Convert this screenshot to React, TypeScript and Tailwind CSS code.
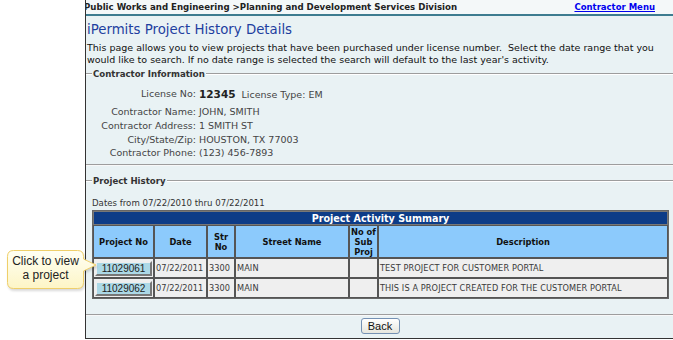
const verdana = "font-['DejaVu_Sans',Verdana,sans-serif]";

const rows = [
  { no: "11029061", date: "07/22/2011", str: "3300", street: "MAIN", desc: "TEST PROJECT FOR CUSTOMER PORTAL" },
  { no: "11029062", date: "07/22/2011", str: "3300", street: "MAIN", desc: "THIS IS A PROJECT CREATED FOR THE CUSTOMER PORTAL" },
];

const info = [
  { label: "Contractor Name:", value: "JOHN, SMITH" },
  { label: "Contractor Address:", value: "1 SMITH ST" },
  { label: "City/State/Zip:", value: "HOUSTON, TX  77003" },
  { label: "Contractor Phone:", value: "(123) 456-7893" },
];

const Legend = ({ title }: { title: string }) => (
  <div className="flex items-center h-[12px]">
    <div className="w-[6px] h-[2px] border-t border-[#9d9d9d] bg-white" />
    <span className="px-[1px] text-[8.6px] font-bold text-[#333] leading-[12px]">{title}</span>
    <div className="flex-1 h-[2px] border-t border-[#9d9d9d] bg-white" />
  </div>
);

const Rule = ({ className }: { className: string }) => (
  <div className={"h-[2px] border-t border-[#9d9d9d] bg-[#f8f8f8] " + className} />
);

const App = () => {
  return (
    <div className={"relative w-[673px] h-[340px] overflow-hidden bg-white " + verdana}>
      <div className="flex">
        <div className="w-[85px] shrink-0" />
        <div className="w-[589px] h-[339px] shrink-0 overflow-hidden border-l border-b border-[#333] bg-[#e9f2f4] flex flex-col">
          {/* header */}
          <div className="h-[14px] flex items-center justify-between bg-[#f4f8f9] pr-[19px]">
            <span className="-ml-[2px] text-[8.65px] font-bold text-[#222] whitespace-nowrap">
              Public Works and Engineering &gt;Planning and Development Services Division
            </span>
            <a className="text-[8.5px] font-bold text-[#0000ee] underline whitespace-nowrap">Contractor Menu</a>
          </div>
          <div className="h-[2px] bg-[#3d7c90]" />

          <div className="mt-[4px] h-[20px] leading-[20px] pl-[1px] text-[13.3px] text-[#1e3fa0] whitespace-nowrap">
            iPermits Project History Details
          </div>

          <div className="mt-[2px] pl-[1px] text-[9.5px] leading-[12px] text-[#111] whitespace-nowrap">
            <div>This page allows you to view projects that have been purchased under license number.&nbsp; Select the date range that you</div>
            <div>would like to search. If no date range is selected the search will default to the last year's activity.</div>
          </div>

          <div className="mt-[2px]">
            <Legend title="Contractor Information" />
          </div>

          <div className="flex flex-col text-[9.5px] text-[#444] leading-[14px]">
            <div className="flex h-[14px] mt-[7px]">
              <div className="w-[110px] text-right whitespace-nowrap">License No:</div>
              <div className="pl-[3px] whitespace-nowrap">
                <span className="font-bold text-[#222] text-[10.5px]">12345</span>
                <span className="pl-[6px]">License Type: EM</span>
              </div>
            </div>
            <div className="mt-[4px] flex flex-col">
              {info.map((r) => (
                <div key={r.label} className="flex h-[13.8px]">
                  <div className="w-[110px] text-right whitespace-nowrap">{r.label}</div>
                  <div className="pl-[3px] whitespace-nowrap">{r.value}</div>
                </div>
              ))}
            </div>
          </div>

          <Rule className="mt-[4px]" />

          <div className="mt-[9px]">
            <Legend title="Project History" />
          </div>

          <div className="mt-[10px] h-[12px] leading-[12px] pl-[6px] text-[8.6px] text-[#333] whitespace-nowrap">
            Dates from 07/22/2010 thru 07/22/2011
          </div>

          <div className="mt-[1px] pl-[6px]">
            <table className="table-fixed w-[577px] border-separate border-spacing-0 border border-[#666]">
              <colgroup>
                <col className="w-[61px]" />
                <col className="w-[53px]" />
                <col className="w-[28px]" />
                <col className="w-[114px]" />
                <col className="w-[29px]" />
                <col className="w-[290px]" />
              </colgroup>
              <tbody>
                <tr className="h-[14px]">
                  <td colSpan={6} className="p-0 border border-[#777] bg-[#0d3c87] text-center text-white font-bold text-[9.6px] leading-[11px]">
                    Project Activity Summary
                  </td>
                </tr>
                <tr className="h-[33px] bg-[#8ccafc] text-[8.3px] font-bold text-[#111] leading-[10px] text-center">
                  <td className="p-0 border border-[#555]">Project No</td>
                  <td className="p-0 border border-[#555]">Date</td>
                  <td className="p-0 border border-[#555]">Str<br />No</td>
                  <td className="p-0 border border-[#555]">Street Name</td>
                  <td className="p-0 border border-[#555]">No of<br />Sub<br />Proj</td>
                  <td className="p-0 border border-[#555]">Description</td>
                </tr>
                {rows.map((r) => (
                  <tr key={r.no} className="h-[20px] bg-[#efefef] text-[8.2px] text-[#3a3a3a]">
                    <td className="p-0 border border-[#555]">
                      <div className="flex justify-center">
                        <button className="w-[57px] h-[15px] bg-[#acd8e6] border-2 border-t-[#eee] border-l-[#eee] border-r-[#777] border-b-[#777] font-['Liberation_Sans',Arial,sans-serif] text-[10px] leading-[11px] text-[#222]">
                          {r.no}
                        </button>
                      </div>
                    </td>
                    <td className="p-0 pl-[1px] border border-[#555] whitespace-nowrap">{r.date}</td>
                    <td className="p-0 pl-[1px] border border-[#555]">{r.str}</td>
                    <td className="p-0 pl-[1px] border border-[#555] tracking-[0.1px]">{r.street}</td>
                    <td className="p-0 border border-[#555]"></td>
                    <td className="p-0 pl-[1px] border border-[#555] whitespace-nowrap tracking-[0.1px]">{r.desc}</td>
                  </tr>
                ))}
              </tbody>
            </table>
          </div>

          <Rule className="mt-[15px]" />

          <div className="mt-[2px] flex justify-center">
            <button className="w-[39px] h-[16px] rounded-[3px] border border-[#7591b3] bg-gradient-to-b from-white to-[#e6e6de] font-['Liberation_Sans',Arial,sans-serif] text-[11px] leading-[14px] text-[#111]">
              Back
            </button>
          </div>
        </div>
      </div>

      {/* callout */}
      <div className="absolute left-0 top-[245px] w-[100px] h-[50px]">
        <svg width="100" height="50" className="absolute inset-0 drop-shadow-[1px_2px_1px_rgba(0,0,0,0.15)]">
          <defs>
            <linearGradient id="cg" x1="0" y1="0" x2="0" y2="1">
              <stop offset="0" stopColor="#fffff4" />
              <stop offset="1" stopColor="#fdf5c6" />
            </linearGradient>
          </defs>
          <path
            d="M13.5 5.5 H77.5 Q83.5 5.5 83.5 11.5 V14 L96 20 L83.5 26 V37.5 Q83.5 43.5 77.5 43.5 H13.5 Q7.5 43.5 7.5 37.5 V11.5 Q7.5 5.5 13.5 5.5 Z"
            fill="url(#cg)"
            stroke="#efcf6a"
            strokeWidth="1"
          />
        </svg>
        <div className="absolute left-[7px] top-[9px] w-[77px] flex flex-col items-center font-['Liberation_Sans',Arial,sans-serif] text-[12px] leading-[14px] text-[#222]">
          <span>Click to view</span>
          <span>a project</span>
        </div>
      </div>
    </div>
  );
};

export default App;
